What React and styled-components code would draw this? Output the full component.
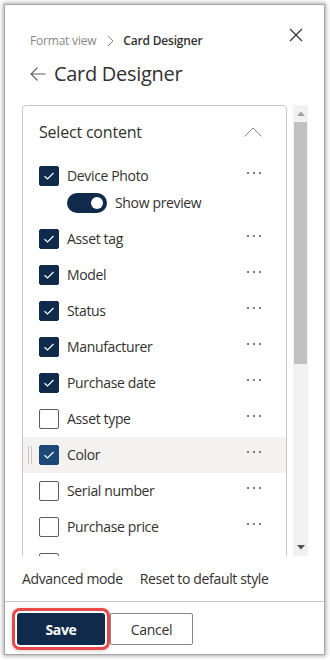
import React from "react";
import styled, { createGlobalStyle } from "styled-components";

const Global = createGlobalStyle`
  html, body { margin: 0; padding: 0; background: #ffffff; }
  body { font-family: "Open Sans", "Noto Sans", sans-serif; color: #323130; }
  * { box-sizing: border-box; }
`;

const NAVY = "#0f2a4b";

const Frame = styled.div`
  width: 330px;
  height: 660px;
  padding: 4px 5px 5px 4px;
`;

const Panel = styled.div`
  position: relative;
  height: 100%;
  background: #fff;
  border: 1px solid #a8a8a8;
  box-shadow: 0 0 4px 1px rgba(0, 0, 0, 0.35);
  display: flex;
  flex-direction: column;
`;

const Header = styled.div`
  padding: 28px 20px 0 25px;
`;

const Breadcrumb = styled.div`
  display: flex;
  align-items: center;
  font-size: 12px;
  line-height: 16px;
  letter-spacing: -0.2px;
`;

const Crumb = styled.span`
  color: ${(p) => (p.$current ? "#323130" : "#8a8886")};
  font-weight: ${(p) => (p.$current ? 600 : 400)};
`;

const CrumbSep = styled.span`
  display: inline-flex;
  margin: 0 9px 0 11px;
`;

const Close = styled.button`
  position: absolute;
  top: 23px;
  right: 21px;
  width: 14px;
  height: 14px;
  padding: 0;
  border: 0;
  background: none;
  display: flex;
`;

const Title = styled.h1`
  margin: 11px 0 0;
  display: flex;
  align-items: center;
  gap: 8px;
  font-size: 20px;
  line-height: 28px;
  font-weight: 400;
  color: #323130;
  letter-spacing: -0.3px;
`;

const Body = styled.div`
  margin-top: 17px;
  height: 451px;
  display: flex;
  gap: 6px;
  padding: 0 16px 0 17px;
`;

const Viewport = styled.div`
  flex: 1;
  overflow: hidden;
`;

const Card = styled.div`
  border: 1px solid #c8c6c4;
  border-radius: 4px;
  padding-bottom: 20px;
`;

const CardHead = styled.div`
  display: flex;
  align-items: center;
  justify-content: space-between;
  padding: 15px 24px 15px 16px;
  font-size: 16px;
  line-height: 22px;
  color: #323130;
  letter-spacing: -0.2px;
`;

const Row = styled.div`
  position: relative;
  height: 36px;
  display: flex;
  align-items: center;
  padding: 0 24px 0 16px;
  background: ${(p) => (p.$hover ? "#f3f2f1" : "transparent")};
`;

const Handle = styled.span`
  position: absolute;
  left: 5px;
  top: 9px;
  width: 4px;
  height: 18px;
  border-left: 1px solid #c8c6c4;
  border-right: 1px solid #c8c6c4;
`;

const Box = styled.span`
  width: 20px;
  height: 20px;
  border-radius: 2px;
  flex: none;
  display: flex;
  align-items: center;
  justify-content: center;
  background: ${(p) => (p.$checked ? (p.$hover ? "#1c4877" : NAVY) : "#fff")};
  border: 1px solid ${(p) => (p.$checked ? (p.$hover ? "#1c4877" : NAVY) : "#605e5c")};
`;

const Label = styled.span`
  flex: 1;
  margin-left: 8px;
  font-size: 14px;
  line-height: 20px;
  color: #323130;
  letter-spacing: -0.35px;
`;

const More = styled.span`
  display: flex;
  margin-top: -6px;
`;

const ToggleRow = styled.div`
  display: flex;
  align-items: center;
  gap: 8px;
  margin: -1px 0 8px 44px;
  height: 20px;
`;

const Toggle = styled.span`
  width: 40px;
  height: 20px;
  border-radius: 10px;
  background: ${NAVY};
  display: flex;
  align-items: center;
  justify-content: flex-end;
  padding-right: 4px;
  &::after {
    content: "";
    width: 12px;
    height: 12px;
    border-radius: 50%;
    background: #fff;
  }
`;

const ToggleText = styled.span`
  font-size: 14px;
  line-height: 20px;
  color: #323130;
  letter-spacing: -0.35px;
`;

const Scrollbar = styled.div`
  width: 15px;
  background: #f1f1f1;
  display: flex;
  flex-direction: column;
  align-items: center;
`;

const Arrow = styled.span`
  height: 17px;
  display: flex;
  align-items: center;
  justify-content: center;
`;

const Thumb = styled.div`
  width: 13px;
  height: 242px;
  background: #c1c1c1;
`;

const Spacer = styled.div`
  flex: 1;
`;

const Links = styled.div`
  display: flex;
  gap: 17px;
  margin-top: 13px;
  padding-left: 17px;
  font-size: 14px;
  line-height: 20px;
  letter-spacing: -0.35px;
  color: #323130;
`;

const Divider = styled.div`
  margin-top: 12px;
  height: 1px;
  background: #c8c6c4;
`;

const Buttons = styled.div`
  display: flex;
  gap: 5px;
  margin-top: 11px;
  padding-left: 12px;
`;

const SaveBtn = styled.button`
  width: 88px;
  height: 32px;
  border: 0;
  background: ${NAVY};
  color: #fff;
  font-family: inherit;
  font-size: 14px;
  font-weight: 700;
  letter-spacing: -0.3px;
  box-shadow: 0 0 0 2px #fff, 0 0 0 5px #e8484a, 0 1px 5px 5px rgba(0, 0, 0, 0.18);
  border-radius: 3px;
`;

const CancelBtn = styled.button`
  width: 83px;
  height: 32px;
  border: 1px solid #8a8886;
  border-radius: 2px;
  background: #fff;
  color: #323130;
  font-family: inherit;
  font-size: 14px;
  font-weight: 400;
  letter-spacing: -0.3px;
`;

const Check = () => (
  <svg width="12" height="10" viewBox="0 0 12 10">
    <path d="M1.5 5.2 L4.5 8 L10.5 2" fill="none" stroke="#fff" strokeWidth="1.2" />
  </svg>
);

const Dots = () => (
  <svg width="16" height="4" viewBox="0 0 16 4">
    <circle cx="2" cy="2" r="1.1" fill="#605e5c" />
    <circle cx="8" cy="2" r="1.1" fill="#605e5c" />
    <circle cx="14" cy="2" r="1.1" fill="#605e5c" />
  </svg>
);

const items = [
  { label: "Asset tag", checked: true },
  { label: "Model", checked: true },
  { label: "Status", checked: true },
  { label: "Manufacturer", checked: true },
  { label: "Purchase date", checked: true },
  { label: "Asset type", checked: false },
  { label: "Color", checked: true, hover: true },
  { label: "Serial number", checked: false },
  { label: "Purchase price", checked: false },
  { label: "", checked: false },
];

function Item({ label, checked, hover }) {
  return (
    <Row $hover={hover}>
      {hover && <Handle />}
      <Box $checked={checked} $hover={hover}>{checked && <Check />}</Box>
      <Label>{label}</Label>
      <More><Dots /></More>
    </Row>
  );
}

export default function App() {
  return (
    <>
      <Global />
      <Frame>
        <Panel>
          <Header>
            <Breadcrumb>
              <Crumb>Format view</Crumb>
              <CrumbSep>
                <svg width="7" height="12" viewBox="0 0 7 12">
                  <path d="M1 1 L6 6 L1 11" fill="none" stroke="#8a8886" strokeWidth="1" />
                </svg>
              </CrumbSep>
              <Crumb $current>Card Designer</Crumb>
            </Breadcrumb>
            <Title>
              <svg width="16" height="14" viewBox="0 0 16 14">
                <path d="M15.5 7 H1 M7.5 0.5 L1 7 L7.5 13.5" fill="none" stroke="#605e5c" strokeWidth="1.1" />
              </svg>
              Card Designer
            </Title>
          </Header>
          <Close aria-label="Close">
            <svg width="14" height="14" viewBox="0 0 14 14">
              <path d="M1 1 L13 13 M13 1 L1 13" stroke="#323130" strokeWidth="1.2" />
            </svg>
          </Close>
          <Body>
            <Viewport>
              <Card>
                <CardHead>
                  Select content
                  <svg width="18" height="10" viewBox="0 0 18 10">
                    <path d="M0.5 9.5 L9 1 L17.5 9.5" fill="none" stroke="#8a8886" strokeWidth="1" />
                  </svg>
                </CardHead>
                <Item label="Device Photo" checked />
                <ToggleRow>
                  <Toggle />
                  <ToggleText>Show preview</ToggleText>
                </ToggleRow>
                {items.map((it, i) => (
                  <Item key={i} {...it} />
                ))}
              </Card>
            </Viewport>
            <Scrollbar>
              <Arrow>
                <svg width="8" height="5" viewBox="0 0 8 5"><path d="M0 5 L4 0.5 L8 5 Z" fill="#a3a3a3" /></svg>
              </Arrow>
              <Thumb />
              <Spacer />
              <Arrow>
                <svg width="8" height="5" viewBox="0 0 8 5"><path d="M0 0 L4 4.5 L8 0 Z" fill="#505050" /></svg>
              </Arrow>
            </Scrollbar>
          </Body>
          <Links>
            <span>Advanced mode</span>
            <span>Reset to default style</span>
          </Links>
          <Divider />
          <Buttons>
            <SaveBtn>Save</SaveBtn>
            <CancelBtn>Cancel</CancelBtn>
          </Buttons>
        </Panel>
      </Frame>
    </>
  );
}
